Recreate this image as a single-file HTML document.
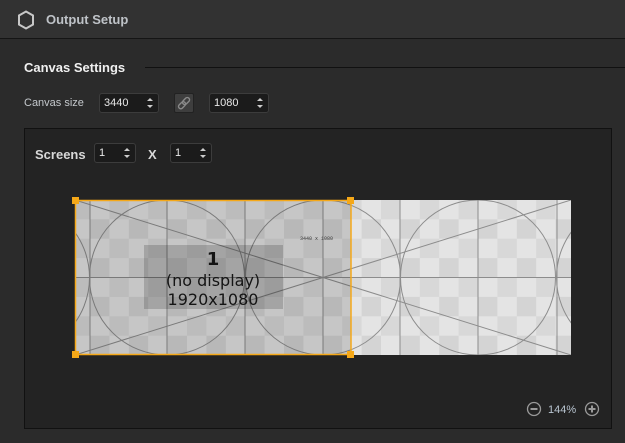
<!DOCTYPE html>
<html><head><meta charset="utf-8"><style>
*{margin:0;padding:0;box-sizing:border-box}
body{width:625px;height:443px;background:#2b2b2b;font-family:"Liberation Sans",sans-serif;position:relative;overflow:hidden;color:#ccc}
.hdr{position:absolute;left:0;top:0;width:625px;height:39px;background:#323232;border-bottom:1px solid #151515}
.hdr .t{position:absolute;left:46px;top:12px;font-size:13px;font-weight:bold;color:#bfc3c8}
.cs{position:absolute;left:24px;top:60px;font-size:13px;font-weight:bold;color:#f0f0f0}
.line{position:absolute;left:145px;top:67px;width:480px;height:1px;background:#111}
.lbl{position:absolute;font-size:12px;color:#c4c8cc}
.spin{position:absolute;height:20px;background:#1b1b1b;border:1px solid #3c3c3c;border-radius:3px;font-size:11px;color:#e8e8e8;padding:3px 0 0 4px}
.spin:after{content:"";position:absolute;right:5px;top:4px;border:3px solid transparent;border-bottom:3px solid #ccc;border-top:0}
.spin:before{content:"";position:absolute;right:5px;bottom:4px;border:3px solid transparent;border-top:3px solid #ccc;border-bottom:0}
.panel{position:absolute;left:24px;top:128px;width:588px;height:301px;background:#232323;border:1px solid #111}
</style></head><body>
<div class="hdr">
<svg style="position:absolute;left:17px;top:10px" width="18" height="20" viewBox="0 0 18 20"><polygon points="9,1.5 16,5.5 16,14.5 9,18.5 2,14.5 2,5.5" fill="none" stroke="#c8c8c8" stroke-width="2"/></svg>
<div class="t">Output Setup</div></div>
<div class="cs">Canvas Settings</div><div class="line"></div>
<div class="lbl" style="left:24px;top:97px;font-size:11px">Canvas size</div>
<div class="spin" style="left:99px;top:93px;width:60px">3440</div>
<div style="position:absolute;left:174px;top:93px;width:20px;height:20px;background:#3e3e3e;border:1px solid #222;border-radius:2px">
<svg width="18" height="18" viewBox="0 0 18 18"><g fill="none" stroke="#8a8a8a" stroke-width="1.4"><rect x="3" y="9" width="8" height="4.5" rx="2.2" transform="rotate(-45 7 11.2)"/><rect x="7" y="4.8" width="8" height="4.5" rx="2.2" transform="rotate(-45 11 7)"/></g></svg></div>
<div class="spin" style="left:209px;top:93px;width:60px">1080</div>
<div class="panel"></div>
<div class="lbl" style="left:35px;top:147px;font-weight:bold;font-size:13px;color:#d8d8d8">Screens</div>
<div class="spin" style="left:94px;top:143px;width:42px">1</div>
<div class="lbl" style="left:148px;top:147px;font-weight:bold;font-size:13px;color:#d8d8d8">X</div>
<div class="spin" style="left:170px;top:143px;width:42px">1</div>
<svg style="position:absolute;left:0;top:0" width="625" height="443">
<defs>
<pattern id="ck" x="90" y="219.3" width="38.8" height="38.8" patternUnits="userSpaceOnUse">
<rect width="38.8" height="38.8" fill="#e4e4e4"/><rect width="19.4" height="19.4" fill="#d4d4d4"/><rect x="19.4" y="19.4" width="19.4" height="19.4" fill="#d8d8d8"/>
</pattern>
<clipPath id="cp"><rect x="75" y="200" width="496" height="155"/></clipPath>
</defs>
<g clip-path="url(#cp)">
<rect x="75" y="200" width="496" height="155" fill="url(#ck)"/>
<g stroke="#8c8c8c" stroke-width="1" fill="none">
<line x1="90" y1="200" x2="90" y2="355"/><line x1="167" y1="200" x2="167" y2="355"/><line x1="245" y1="200" x2="245" y2="355"/><line x1="323" y1="200" x2="323" y2="355"/><line x1="400" y1="200" x2="400" y2="355"/><line x1="478" y1="200" x2="478" y2="355"/><line x1="557" y1="200" x2="557" y2="355"/>
<line x1="75" y1="277.5" x2="571" y2="277.5"/>
<line x1="75" y1="200" x2="571" y2="355"/><line x1="75" y1="355" x2="571" y2="200"/>
<circle cx="12" cy="277.5" r="77.5"/><circle cx="167" cy="277.5" r="77.5"/><circle cx="323" cy="277.5" r="77.5"/><circle cx="478" cy="277.5" r="77.5"/><circle cx="634" cy="277.5" r="77.5"/>
</g>
<text x="300" y="240" font-size="5" fill="#444" font-family="Liberation Mono">3440 x 1080</text>
<rect x="75" y="200" width="276" height="155" fill="rgba(0,0,0,0.13)"/>
</g>
<rect x="144" y="245" width="139" height="64" fill="rgba(0,0,0,0.17)"/>
<text x="213" y="265" text-anchor="middle" font-size="18" font-weight="bold" fill="#141414" font-family="DejaVu Sans">1</text>
<text x="213" y="286" text-anchor="middle" font-size="16" fill="#141414" font-family="DejaVu Sans">(no display)</text>
<text x="213" y="305" text-anchor="middle" font-size="16" fill="#141414" font-family="DejaVu Sans">1920x1080</text>
<rect x="75.5" y="200.5" width="275.5" height="154" fill="none" stroke="#f5a818" stroke-width="1.5"/>
<g fill="#f5a818"><rect x="72" y="197" width="7" height="7"/><rect x="347" y="197" width="7" height="7"/><rect x="72" y="351" width="7" height="7"/><rect x="347" y="351" width="7" height="7"/></g>
<g stroke="#9a9a9a" stroke-width="1.3" fill="none"><circle cx="534" cy="409" r="6.5"/><line x1="530.5" y1="409" x2="537.5" y2="409" stroke-width="2"/><circle cx="592" cy="409" r="6.5"/><line x1="588.5" y1="409" x2="595.5" y2="409" stroke-width="2"/><line x1="592" y1="405.5" x2="592" y2="412.5" stroke-width="2"/></g>
<text x="548" y="413" font-size="11" fill="#b8c4d0" font-family="Liberation Sans">144%</text>
</svg>
</body></html>
